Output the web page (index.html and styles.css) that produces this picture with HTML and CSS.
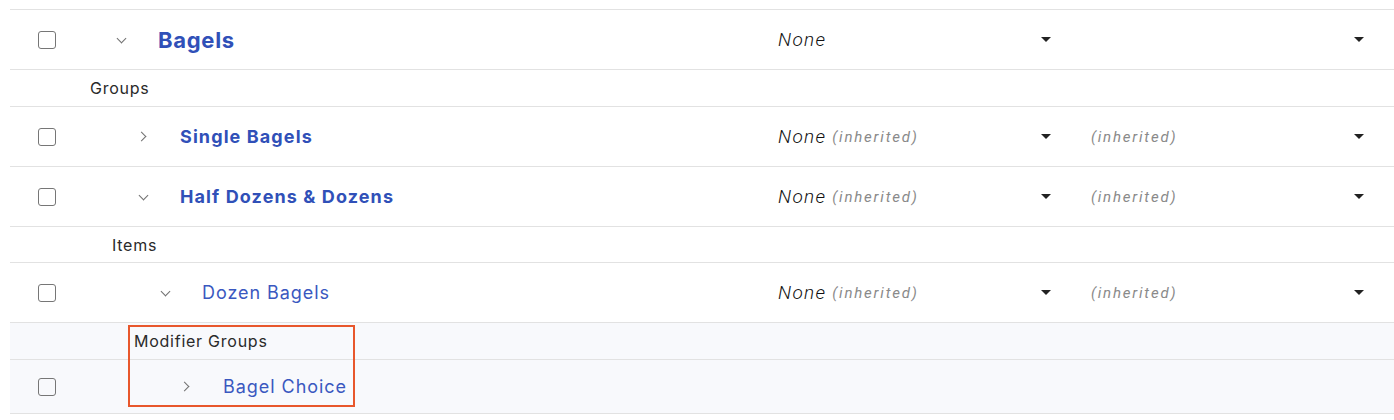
FILE: index.html
```html
<!DOCTYPE html>
<html>
<head>
<meta charset="utf-8">
<link rel="stylesheet" href="styles.css">
</head>
<body>
<div class="table">
  <div class="row item">
    <div class="check"><span class="box"></span></div>
    <div class="name lvl0"><span class="chev down"></span><span class="title t-lg">Bagels</span></div>
    <div class="sel sel1"><span class="val">None</span><span class="caret"></span></div>
    <div class="sel sel2"><span class="inh"></span><span class="caret"></span></div>
  </div>
  <div class="row sub"><span class="label lvl0s">Groups</span></div>
  <div class="row item">
    <div class="check"><span class="box"></span></div>
    <div class="name lvl1"><span class="chev right"></span><span class="title t-md">Single Bagels</span></div>
    <div class="sel sel1"><span class="val">None</span><span class="inh">(inherited)</span><span class="caret"></span></div>
    <div class="sel sel2"><span class="inh">(inherited)</span><span class="caret"></span></div>
  </div>
  <div class="row item">
    <div class="check"><span class="box"></span></div>
    <div class="name lvl1"><span class="chev down"></span><span class="title t-md">Half Dozens &amp; Dozens</span></div>
    <div class="sel sel1"><span class="val">None</span><span class="inh">(inherited)</span><span class="caret"></span></div>
    <div class="sel sel2"><span class="inh">(inherited)</span><span class="caret"></span></div>
  </div>
  <div class="row sub sub-s"><span class="label lvl1s">Items</span></div>
  <div class="row item">
    <div class="check"><span class="box"></span></div>
    <div class="name lvl2"><span class="chev down"></span><span class="title t-reg">Dozen Bagels</span></div>
    <div class="sel sel1"><span class="val">None</span><span class="inh">(inherited)</span><span class="caret"></span></div>
    <div class="sel sel2"><span class="inh">(inherited)</span><span class="caret"></span></div>
  </div>
  <div class="row sub tint"><span class="label lvl2s">Modifier Groups</span></div>
  <div class="row item tint short">
    <div class="check"><span class="box"></span></div>
    <div class="name lvl3"><span class="chev right"></span><span class="title t-reg">Bagel Choice</span></div>
  </div>
  <div class="highlight"></div>
</div>
</body>
</html>
```

FILE: styles.css
```css
html, body {
  margin: 0;
  padding: 0;
  background: #ffffff;
  overflow: hidden;
}
body {
  font-family: Inter, Roboto, "Liberation Sans", sans-serif;
  color: #222;
}
.table {
  position: relative;
  margin: 9px 0 0 10px;
  border-top: 1px solid #e2e2e2;
}
.row {
  display: flex;
  align-items: center;
  border-bottom: 1px solid #e2e2e2;
  box-sizing: border-box;
}
.row.item { height: 60px; }
.row.item.short { height: 54px; }
.row.sub { height: 37px; }
.row.sub.sub-s { height: 36px; }
.row.tint { background: #f8f9fc; }
.check {
  width: 28px;
  padding-left: 28px;
  display: flex;
  align-items: center;
  flex: none;
}
.box {
  width: 16px;
  height: 16px;
  border: 1.5px solid #767676;
  border-radius: 3px;
  display: block;
}
.name {
  display: flex;
  align-items: center;
  width: 712px;
  flex: none;
  box-sizing: border-box;
}
.lvl0 { padding-left: 49px; }
.lvl1 { padding-left: 71px; }
.lvl2 { padding-left: 93px; }
.lvl3 { padding-left: 114px; }
.chev {
  width: 12px;
  height: 12px;
  display: inline-block;
  position: relative;
  margin-right: 31px;
  flex: none;
}
.chev::before {
  content: "";
  position: absolute;
  width: 6px;
  height: 6px;
  border-right: 1.6px solid #707070;
  border-bottom: 1.6px solid #707070;
}
.chev.down::before { transform: rotate(45deg); top: 1px; left: 2.5px; }
.chev.right::before { transform: rotate(-45deg); top: 2.5px; left: 1px; }
.title { color: #3050b8; }
.t-lg { font-size: 22px; font-weight: 700; letter-spacing: 0.7px; }
.t-md { font-size: 18px; font-weight: 700; letter-spacing: 1.1px; }
.t-reg { font-size: 18px; font-weight: 400; color: #3a58c0; letter-spacing: 0.95px; }
.label {
  font-size: 16px;
  color: #2a2a2a;
  letter-spacing: 0.75px;
}
.lvl0s { padding-left: 80px; }
.lvl1s { padding-left: 102px; }
.lvl2s { padding-left: 124px; }
.sel {
  display: flex;
  align-items: center;
  flex: none;
  box-sizing: border-box;
}
.sel1 { width: 313px; }
.sel2 { width: 273px; }
.val {
  font-family: Roboto, "Liberation Sans", sans-serif;
  font-style: italic;
  font-weight: 300;
  font-size: 19px;
  color: #111;
  margin-right: 6px;
  letter-spacing: 1.3px;
}
.inh {
  font-family: Roboto, "Liberation Sans", sans-serif;
  font-style: italic;
  font-size: 15px;
  color: #8a8a8a;
  letter-spacing: 1.8px;
}
.caret {
  margin-left: auto;
  width: 0;
  height: 0;
  border-left: 5px solid transparent;
  border-right: 5px solid transparent;
  border-top: 5px solid #222;
}
.sel1 .caret { margin-right: 40px; }
.sel2 .caret { margin-right: 0; }
.highlight {
  position: absolute;
  left: 118px;
  top: 315px;
  width: 223px;
  height: 78px;
  border: 2px solid #e8572c;
}
```
